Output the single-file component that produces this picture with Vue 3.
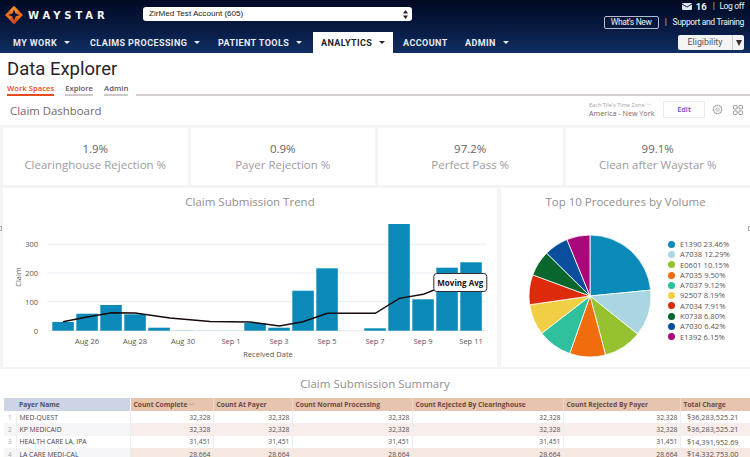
<script setup>
const nav = [
  { label: 'MY WORK', arrow: true },
  { label: 'CLAIMS PROCESSING', arrow: true },
  { label: 'PATIENT TOOLS', arrow: true },
  { label: 'ANALYTICS', arrow: true, active: true },
  { label: 'ACCOUNT' },
  { label: 'ADMIN', arrow: true }
]
const kpis = [
  ['1.9%', 'Clearinghouse Rejection %'],
  ['0.9%', 'Payer Rejection %'],
  ['97.2%', 'Perfect Pass %'],
  ['99.1%', 'Clean after Waystar %']
]
const zero = 330.7
const tops = [322, 313.7, 305, 314.3, 327.7, 330, 330.2, 330.2, 323, 327.7, 290.7, 268.3, null, 328.3, 224, 299.3, 267.7, 262.3]
const bars = tops.map((t, i) => ({ x: 52.3 + i * 24, y: t, h: t === null ? 0 : zero - t, light: i === 5 || i === 6 || i === 7 })).filter(b => b.h > 0)
const grid = [[300, 244.3], [200, 273], [100, 301.7], [0, 330.7]]
const ticks = [['Aug 26', 87], ['Aug 28', 135], ['Aug 30', 183], ['Sep 1', 231], ['Sep 3', 279], ['Sep 5', 327], ['Sep 7', 375], ['Sep 9', 423], ['Sep 11', 471]]
const line = '63,321.7 87,317 111.7,312.7 135,313 170,318 210,321.5 250,322 279.3,326 303,321.7 327.3,313.3 375.3,313.3 399.3,298.3 423.3,294.3 434,290'

const procs = [
  ['E1390', 23.46, '#0a8ab8'], ['A7038', 12.29, '#a9d6e0'], ['E0601', 10.15, '#95c22e'],
  ['A7035', 9.5, '#f16c0c'], ['A7037', 9.12, '#2fc09d'], ['92507', 8.19, '#f1cf45'],
  ['A7034', 7.91, '#dc2a0a'], ['K0738', 6.8, '#09662c'], ['A7030', 6.42, '#0a4f9e'], ['E1392', 6.15, '#a8087c']
]
let acc = 0
const slices = procs.map(([code, pct, color]) => {
  const a0 = acc / 100 * Math.PI * 2
  acc += pct
  const a1 = acc / 100 * Math.PI * 2
  const r = 61
  const p = a => `${(r * Math.sin(a)).toFixed(2)} ${(-r * Math.cos(a)).toFixed(2)}`
  return { code, pct: pct.toFixed(2), color, d: `M0 0L${p(a0)}A${r} ${r} 0 0 1 ${p(a1)}Z` }
})
const rows = [
  ['MED-QUEST', '32,328', '$36,283,525.21'],
  ['KP MEDICAID', '32,328', '$36,283,525.21'],
  ['HEALTH CARE LA, IPA', '31,451', '$14,391,952.69'],
  ['LA CARE MEDI-CAL', '28,664', '$14,332,753.00']
]
</script>

<template>
  <div class="page">
    <header class="head">
      <div class="top">
        <div class="brand">
          <svg class="logo" width="18" height="18" viewBox="0 0 18 18">
            <path d="M9 0L18 9 9 18 0 9Z" fill="#ee6d1e"/>
            <path d="M9 0L13.5 4.5 9 9 4.5 4.5Z" fill="#f58a2b"/>
            <path d="M9 18L4.5 13.5 9 9 13.5 13.5Z" fill="#d94f1c"/>
            <path d="M9 3.4L10.6 7.4 14.6 9 10.6 10.6 9 14.6 7.4 10.6 3.4 9 7.4 7.4Z" fill="#0a1738"/>
          </svg>
          <span class="word">WAYSTAR</span>
        </div>
        <div class="select">
          <span>ZirMed Test Account (605)</span>
          <svg width="5" height="9" viewBox="0 0 5 9"><path d="M2.5 0L5 3.4H0ZM2.5 9L0 5.6H5Z" fill="#222"/></svg>
        </div>
        <div class="util">
          <div class="util-row">
            <svg width="10" height="7" viewBox="0 0 10 7"><rect width="10" height="7" rx="1" fill="#dfe3ea"/><path d="M0 1l5 3 5-3" fill="none" stroke="#12264f" stroke-width="1"/></svg>
            <b class="count">16</b>
            <span class="sep">|</span>
            <span>Log off</span>
          </div>
          <div class="util-row second">
            <span class="whats">What's New</span>
            <span class="sep">|</span>
            <span>Support and Training</span>
          </div>
        </div>
      </div>
      <nav class="nav">
        <div v-for="n in nav" :key="n.label" class="nav-item" :class="{ active: n.active }">
          <span>{{ n.label }}</span>
          <i v-if="n.arrow" class="caret"></i>
        </div>
        <div class="elig">
          <span class="elig-text">Eligibility</span>
          <span class="elig-arrow"><i></i></span>
        </div>
      </nav>
    </header>

    <section class="titlebar">
      <h1>Data Explorer</h1>
      <div class="tabs">
        <span class="tab on">Work Spaces</span>
        <span class="tab">Explore</span>
        <span class="tab">Admin</span>
        <span class="tab-rest"></span>
      </div>
    </section>

    <section class="dash">
      <span class="dash-title">Claim Dashboard</span>
      <div class="dash-right">
        <div class="tz">
          <span class="tz-a">Each Tile's Time Zone ﹀</span>
          <span class="tz-b">America - New York</span>
        </div>
        <span class="edit">Edit</span>
        <svg width="11" height="11" viewBox="0 0 12 12" fill="none" stroke="#a59da0"><circle cx="6" cy="6" r="4.6" stroke-width="1.4" stroke-dasharray="2 .5"/><circle cx="6" cy="6" r="1.8"/></svg>
        <svg width="10" height="10" viewBox="0 0 11 11" fill="none" stroke="#8f8a90"><rect x=".5" y=".5" width="4" height="4" rx="1"/><rect x="6.5" y=".5" width="4" height="4" rx="1"/><rect x=".5" y="6.5" width="4" height="4" rx="1"/><rect x="6.5" y="6.5" width="4" height="4" rx="1"/></svg>
      </div>
    </section>

    <section class="kpis">
      <div v-for="k in kpis" :key="k[1]" class="kpi">
        <span class="kpi-v">{{ k[0] }}</span>
        <span class="kpi-l">{{ k[1] }}</span>
      </div>
    </section>

    <section class="charts">
      <div class="panel trend">
        <h2>Claim Submission Trend</h2>
        <svg class="trend-svg" width="494" height="179" viewBox="3 188 494 179">
          <g v-for="g in grid" :key="g[0]">
            <line x1="48" x2="487" :y1="g[1]" :y2="g[1]" stroke="#e9ebf1"/>
            <text x="38" :y="g[1] + 3" text-anchor="end" class="tick">{{ g[0] }}</text>
          </g>
          <rect v-for="b in bars" :key="b.x" :x="b.x" :y="b.y" width="21.5" :height="b.h" :fill="b.light ? '#b9dcea' : '#0a8ab8'"/>
          <polyline :points="line" fill="none" stroke="#17090f" stroke-width="1.4"/>
          <text v-for="t in ticks" :key="t[0]" :x="t[1]" y="344" text-anchor="middle" class="tick">{{ t[0] }}</text>
          <text x="268" y="357" text-anchor="middle" class="tick">Received Date</text>
          <text transform="translate(21 277) rotate(-90)" text-anchor="middle" class="tick">Claim</text>
          <rect x="433.8" y="273.5" width="53" height="18" rx="3" fill="#fff" stroke="#3a2630"/>
          <text x="460.3" y="285.8" text-anchor="middle" class="bubble">Moving Avg</text>
        </svg>
      </div>
      <div class="panel top10">
        <h2>Top 10 Procedures by Volume</h2>
        <div class="pie-wrap">
          <svg width="124" height="124" viewBox="-62 -62 124 124">
            <path v-for="s in slices" :key="s.code" :d="s.d" :fill="s.color" stroke="#fff" stroke-width=".8"/>
          </svg>
          <ul class="legend">
            <li v-for="s in slices" :key="s.code"><i :style="{ background: s.color }"></i>{{ s.code }} {{ s.pct }}%</li>
          </ul>
        </div>
      </div>
      <i class="edge left"></i>
      <i class="edge right"></i>
    </section>

    <section class="summary">
      <h2>Claim Submission Summary</h2>
      <table>
        <colgroup>
          <col class="c0"><col class="c1"><col class="c2"><col class="c3"><col class="c4"><col class="c5"><col class="c6"><col class="c7">
        </colgroup>
        <thead>
          <tr>
            <th class="name-h" colspan="2">Payer Name</th>
            <th>Count Complete <span class="sort">﹀</span></th>
            <th>Count At Payer</th>
            <th>Count Normal Processing</th>
            <th>Count Rejected By Clearinghouse</th>
            <th>Count Rejected By Payer</th>
            <th>Total Charge</th>
          </tr>
        </thead>
        <tbody>
          <tr v-for="(r, i) in rows" :key="r[0]" :class="'r' + i">
            <td class="idx">{{ i + 1 }}</td>
            <td class="name">{{ r[0] }}</td>
            <td v-for="c in 5" :key="c" class="num">{{ r[1] }}</td>
            <td class="num money">{{ r[2] }}</td>
          </tr>
        </tbody>
      </table>
    </section>
  </div>
</template>

<style>
html, body { margin: 0; background: #fff; overflow: hidden; }
</style>

<style scoped>
.page {
  width: 750px; height: 457px; overflow: hidden; background: #f4f4f7;
  font-family: "Open Sans", "Noto Sans", sans-serif; color: #555;
}
.head {
  height: 53px;
  background: linear-gradient(#020a24 0%, #071a42 55%, #102f63 100%);
  color: #f1f3f7;
}
.top { height: 32px; display: flex; position: relative; }
.brand { display: flex; align-items: center; gap: 5px; width: 143px; padding: 6px 0 8px 5px; box-sizing: border-box; height: 32px; }
.word { font: 700 10px "DejaVu Sans", sans-serif; letter-spacing: 3.9px; color: #f3f4f7; }
.select {
  width: 269px; height: 14px; margin-top: 7px; background: #fff; border-radius: 3px;
  display: flex; align-items: center; justify-content: space-between; padding: 0 4px 0 6px; box-sizing: border-box;
  font: 8.1px/14px "Liberation Sans", sans-serif; color: #222;
}
.util { flex: 1; display: flex; flex-direction: column; align-items: flex-end; padding-right: 6px; font: 8.5px Roboto, sans-serif; letter-spacing: -.35px; }
.util-row { display: flex; align-items: center; gap: 5px; height: 12px; }
.util-row.second { margin-top: 3px; height: 14px; gap: 6px; }
.count { font-size: 9.5px; margin-left: -1px; margin-right: 1px; letter-spacing: 0; }
.sep { color: #c9cfdc; }
.whats { border: 1px solid #b5bccb; border-radius: 2px; width: 55px; box-sizing: border-box; text-align: center; line-height: 11px; }
.nav { height: 21px; display: flex; position: relative; padding-left: 5px; }
.nav-item {
  display: flex; align-items: center; gap: 7px; padding-left: 8px; box-sizing: border-box;
  font: 700 9px Roboto, sans-serif; letter-spacing: .42px; color: #e8ebf2; white-space: nowrap;
}
.nav-item:nth-child(1) { width: 77px; }
.nav-item:nth-child(2) { width: 128px; }
.nav-item:nth-child(3) { width: 103px; }
.nav-item:nth-child(4) { width: 80px; }
.nav-item:nth-child(5) { width: 62px; margin-left: 2px; }
.nav-item:nth-child(6) { width: 60px; }
.nav-item.active { background: #fff; color: #24222a; }
.caret { width: 0; height: 0; border: 3.2px solid transparent; border-top: 3.6px solid currentColor; border-bottom: 0; }
.elig {
  position: absolute; right: 6px; top: 3px; width: 66px; height: 15px; background: #f4f4f4; border-radius: 2px;
  display: flex; color: #555; font: 8.8px/15px Roboto, sans-serif;
}
.elig-text { flex: 1; text-align: center; border-right: 1px solid #ccc; }
.elig-arrow { width: 11px; display: flex; align-items: center; justify-content: center; }
.elig-arrow i { width: 0; height: 0; border: 3px solid transparent; border-top: 6px solid #3a2e2e; border-bottom: 0; }

.titlebar { height: 43px; background: #fff; position: relative; padding-left: 7px; box-sizing: border-box; }
h1 { margin: 0; font: 400 18.5px/26px Roboto, sans-serif; color: #2b2226; height: 29px; padding-top: 3px; box-sizing: border-box; }
.tabs { display: flex; gap: 11px; height: 14px; align-items: flex-end; }
.tab { font: 600 7.7px/12px "Open Sans", sans-serif; color: #67525c; border-bottom: 2px solid #cfc8cb; height: 14px; box-sizing: border-box; }
.tab.on { color: #ea4a20; border-bottom-color: #ea4a20; }
.tab-rest { flex: 1; height: 2px; background: #d6cfd1; margin-left: -3px; }

.dash { height: 29px; background: #fff; display: flex; align-items: center; justify-content: space-between; padding: 0 7px 0 10px; box-sizing: border-box; }
.dash-title { font: 400 11.4px "Open Sans", sans-serif; color: #71686d; }
.dash-right { display: flex; align-items: center; margin-bottom: 2px; }
.tz { display: flex; flex-direction: column; width: 65px; margin-right: 9px; }
.tz-a { font: 5.6px/7px "Open Sans", sans-serif; color: #a8a2a6; white-space: nowrap; }
.tz-b { font: 7.2px/9px "Open Sans", sans-serif; color: #75686e; white-space: nowrap; }
.edit { width: 42px; height: 17px; border: 1px solid #ececf0; box-sizing: border-box; text-align: center; font: 600 7.4px/15px "Open Sans", sans-serif; color: #6f47c4; margin-right: 7px; }
.dash-right svg:last-child { margin-left: 10px; }

.kpis { display: flex; gap: 3px; padding: 3px 0 3px 3px; height: 63px; box-sizing: border-box; }
.kpi { flex: 1; background: #fff; display: flex; flex-direction: column; align-items: center; justify-content: center; }
.kpi-v { font: 400 11.5px/15.8px "Open Sans", sans-serif; color: #6b5f65; }
.kpi-l { font: 400 11.5px/15.8px "Open Sans", sans-serif; color: #a09a9e; }

.charts { display: flex; gap: 4px; padding-left: 3px; height: 179px; position: relative; }
.panel { background: #fff; position: relative; }
.trend { width: 494px; }
.top10 { flex: 1; }
h2 { margin: 0; font: 400 11.5px/16px "Open Sans", sans-serif; color: #918e91; text-align: center; }
.trend h2, .top10 h2 { position: relative; padding-top: 6px; height: 22px; z-index: 1; }
.trend-svg { position: absolute; left: 0; top: 0; }
.tick { font: 7.5px "Open Sans", sans-serif; fill: #555; }
.bubble { font: 700 8px "Open Sans", sans-serif; fill: #171015; }
.pie-wrap { display: flex; align-items: flex-start; padding: 18px 0 0 27px; }
.legend { list-style: none; margin: 5px 0 0 16px; padding: 0; font: 7.6px/10.3px "Open Sans", sans-serif; color: #5f5259; }
.legend li { display: flex; align-items: center; height: 10.3px; white-space: nowrap; }
.legend i { width: 7px; height: 7px; border-radius: 50%; margin-right: 5px; }
.edge { position: absolute; top: 38px; width: 2px; height: 5px; border: 1px solid #aaa; box-sizing: border-box; }
.edge.left { left: 0; border-left: 0; }
.edge.right { right: 0; border-right: 0; }

.summary { margin-top: 2px; background: #fff; height: 88px; padding-top: 7px; box-sizing: border-box; overflow: hidden; }
.summary h2 { height: 22px; line-height: 16px; }
table { border-collapse: collapse; table-layout: fixed; width: 746px; margin-left: 4px; font: 6.8px "Open Sans", sans-serif; color: #5b4f52; }
.c0 { width: 12px; } .c1 { width: 114px; } .c2 { width: 83px; } .c3 { width: 79px; } .c4 { width: 120px; } .c5 { width: 151px; } .c6 { width: 117px; } .c7 { width: 70px; }
th { height: 13px; padding: 0 0 0 3px; background: #e6c4ae; font-size: 6.7px; font-weight: 700; text-align: left; white-space: nowrap; overflow: hidden; color: #6b4a42; border-right: 1px solid #eddacc; }
th.name-h { background: #ccd4e5; padding-left: 15px; color: #4f4f66; border-right: 1px solid #fff; }
.sort { font-size: 6px; font-weight: 400; }
td { height: 12.3px; padding: 0 2px; white-space: nowrap; border-right: 1px solid #eeeeee; overflow: hidden; }
.idx { text-align: center; color: #aaa; font-size: 6.5px; padding: 0; background: #fff; }
.name { background: #fff; color: #4c4449; padding-left: 3px; }
.num { text-align: right; }
.money { padding-right: 11px; font-size: 7.3px; }
.r1 .num { background: #f7eeeb; }
.r1 .name, .r1 .idx, .r3 .name, .r3 .idx { background: #f6f6f9; }
.r2 .num { background: #fff; }
.r3 .num { background: #f6e7e1; }
</style>
